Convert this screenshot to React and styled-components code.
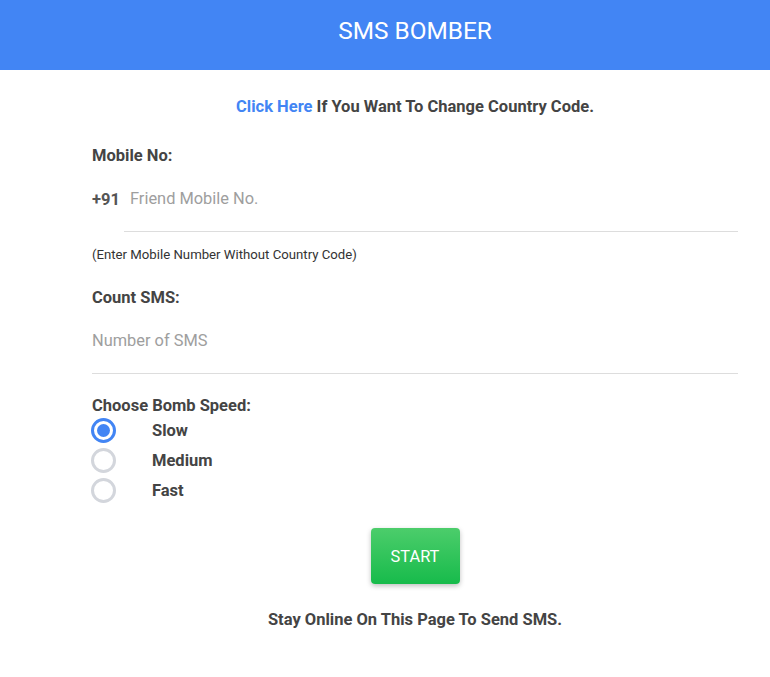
import React, { useState } from 'react';
import styled, { createGlobalStyle } from 'styled-components';

const GlobalStyle = createGlobalStyle`
  html, body {
    margin: 0;
    padding: 0;
    background: #ffffff;
    font-family: Roboto, "Liberation Sans", Arial, sans-serif;
    color: #444444;
  }
`;

const Header = styled.header`
  height: 70px;
  background-color: #4285f4;
  display: flex;
  align-items: center;
  justify-content: center;
  padding: 0 0 9px 60px;
  box-sizing: border-box;
`;

const Title = styled.h1`
  margin: 0;
  font-size: 24.4px;
  font-weight: 400;
  color: #ffffff;
`;

const Container = styled.main`
  padding: 0 32px 40px 92px;
  display: flex;
  flex-direction: column;
`;

const Notice = styled.p`
  margin: 27px 0 0;
  text-align: center;
  font-size: 16.5px;
  font-weight: 700;
  color: #444444;

  a {
    color: #4285f4;
    text-decoration: none;
  }
`;

const Label = styled.label`
  display: block;
  font-size: 16.5px;
  font-weight: 700;
  color: #444444;
  margin-top: ${(p) => p.$top}px;
`;

const InputRow = styled.div`
  display: flex;
  align-items: center;
  margin-top: 13px;
`;

const Prefix = styled.span`
  font-size: 16.5px;
  font-weight: 700;
  color: #555555;
  width: 32px;
  flex-shrink: 0;
  padding-bottom: 12px;
`;

const TextInput = styled.input`
  flex: 1;
  min-width: 0;
  height: 54px;
  padding: 0 0 12px ${(p) => p.$indent || 0}px;
  margin: 0;
  border: none;
  border-bottom: 1px solid #dddddd;
  outline: none;
  font-family: inherit;
  font-size: 16.4px;
  color: #444444;
  background: transparent;
  box-sizing: border-box;

  &::placeholder {
    color: #9e9e9e;
  }
`;

const Hint = styled.p`
  margin: 15px 0 0;
  font-size: 13.2px;
  color: #333333;
`;

const RadioList = styled.div`
  display: flex;
  flex-direction: column;
`;

const RadioItem = styled.label`
  display: flex;
  align-items: center;
  height: 30px;
  cursor: pointer;
  font-size: 16.5px;
  font-weight: 700;
  color: #444444;

  input {
    display: none;
  }
`;

const Circle = styled.span`
  width: 25px;
  height: 25px;
  border-radius: 50%;
  box-sizing: border-box;
  border: 3px solid ${(p) => (p.$on ? '#4285f4' : '#d3d6dc')};
  display: flex;
  align-items: center;
  justify-content: center;
  margin-right: 36px;
  margin-left: -1px;

  &::after {
    content: "";
    width: 13px;
    height: 13px;
    border-radius: 50%;
    background: ${(p) => (p.$on ? '#4285f4' : 'transparent')};
  }
`;

const StartButton = styled.button`
  align-self: center;
  margin-top: 23px;
  width: 89px;
  height: 56px;
  border: none;
  border-radius: 4px;
  background: linear-gradient(180deg, #4ccd6b 0%, #17bb4b 100%);
  box-shadow: 0 2px 5px rgba(0, 0, 0, 0.25);
  color: #ffffff;
  font-family: inherit;
  font-size: 16.4px;
  font-weight: 400;
  cursor: pointer;
`;

const Footer = styled.p`
  margin: 26px 0 0;
  text-align: center;
  font-size: 16.5px;
  font-weight: 700;
  color: #444444;
`;

const speeds = ['Slow', 'Medium', 'Fast'];

const App = () => {
  const [speed, setSpeed] = useState('Slow');

  return (
    <>
      <GlobalStyle />
      <Header>
        <Title>SMS BOMBER</Title>
      </Header>
      <Container>
        <Notice>
          <a href="#country">Click Here</a> If You Want To Change Country Code.
        </Notice>

        <Label $top={30}>Mobile No:</Label>
        <InputRow>
          <Prefix>+91</Prefix>
          <TextInput type="tel" placeholder="Friend Mobile No." $indent={6} />
        </InputRow>
        <Hint>(Enter Mobile Number Without Country Code)</Hint>

        <Label $top={26}>Count SMS:</Label>
        <InputRow>
          <TextInput type="number" placeholder="Number of SMS" />
        </InputRow>

        <Label $top={22}>Choose Bomb Speed:</Label>
        <RadioList>
          {speeds.map((s) => (
            <RadioItem key={s}>
              <input
                type="radio"
                name="speed"
                value={s}
                checked={speed === s}
                onChange={() => setSpeed(s)}
              />
              <Circle $on={speed === s} />
              {s}
            </RadioItem>
          ))}
        </RadioList>

        <StartButton>START</StartButton>
        <Footer>Stay Online On This Page To Send SMS.</Footer>
      </Container>
    </>
  );
};

export default App;
